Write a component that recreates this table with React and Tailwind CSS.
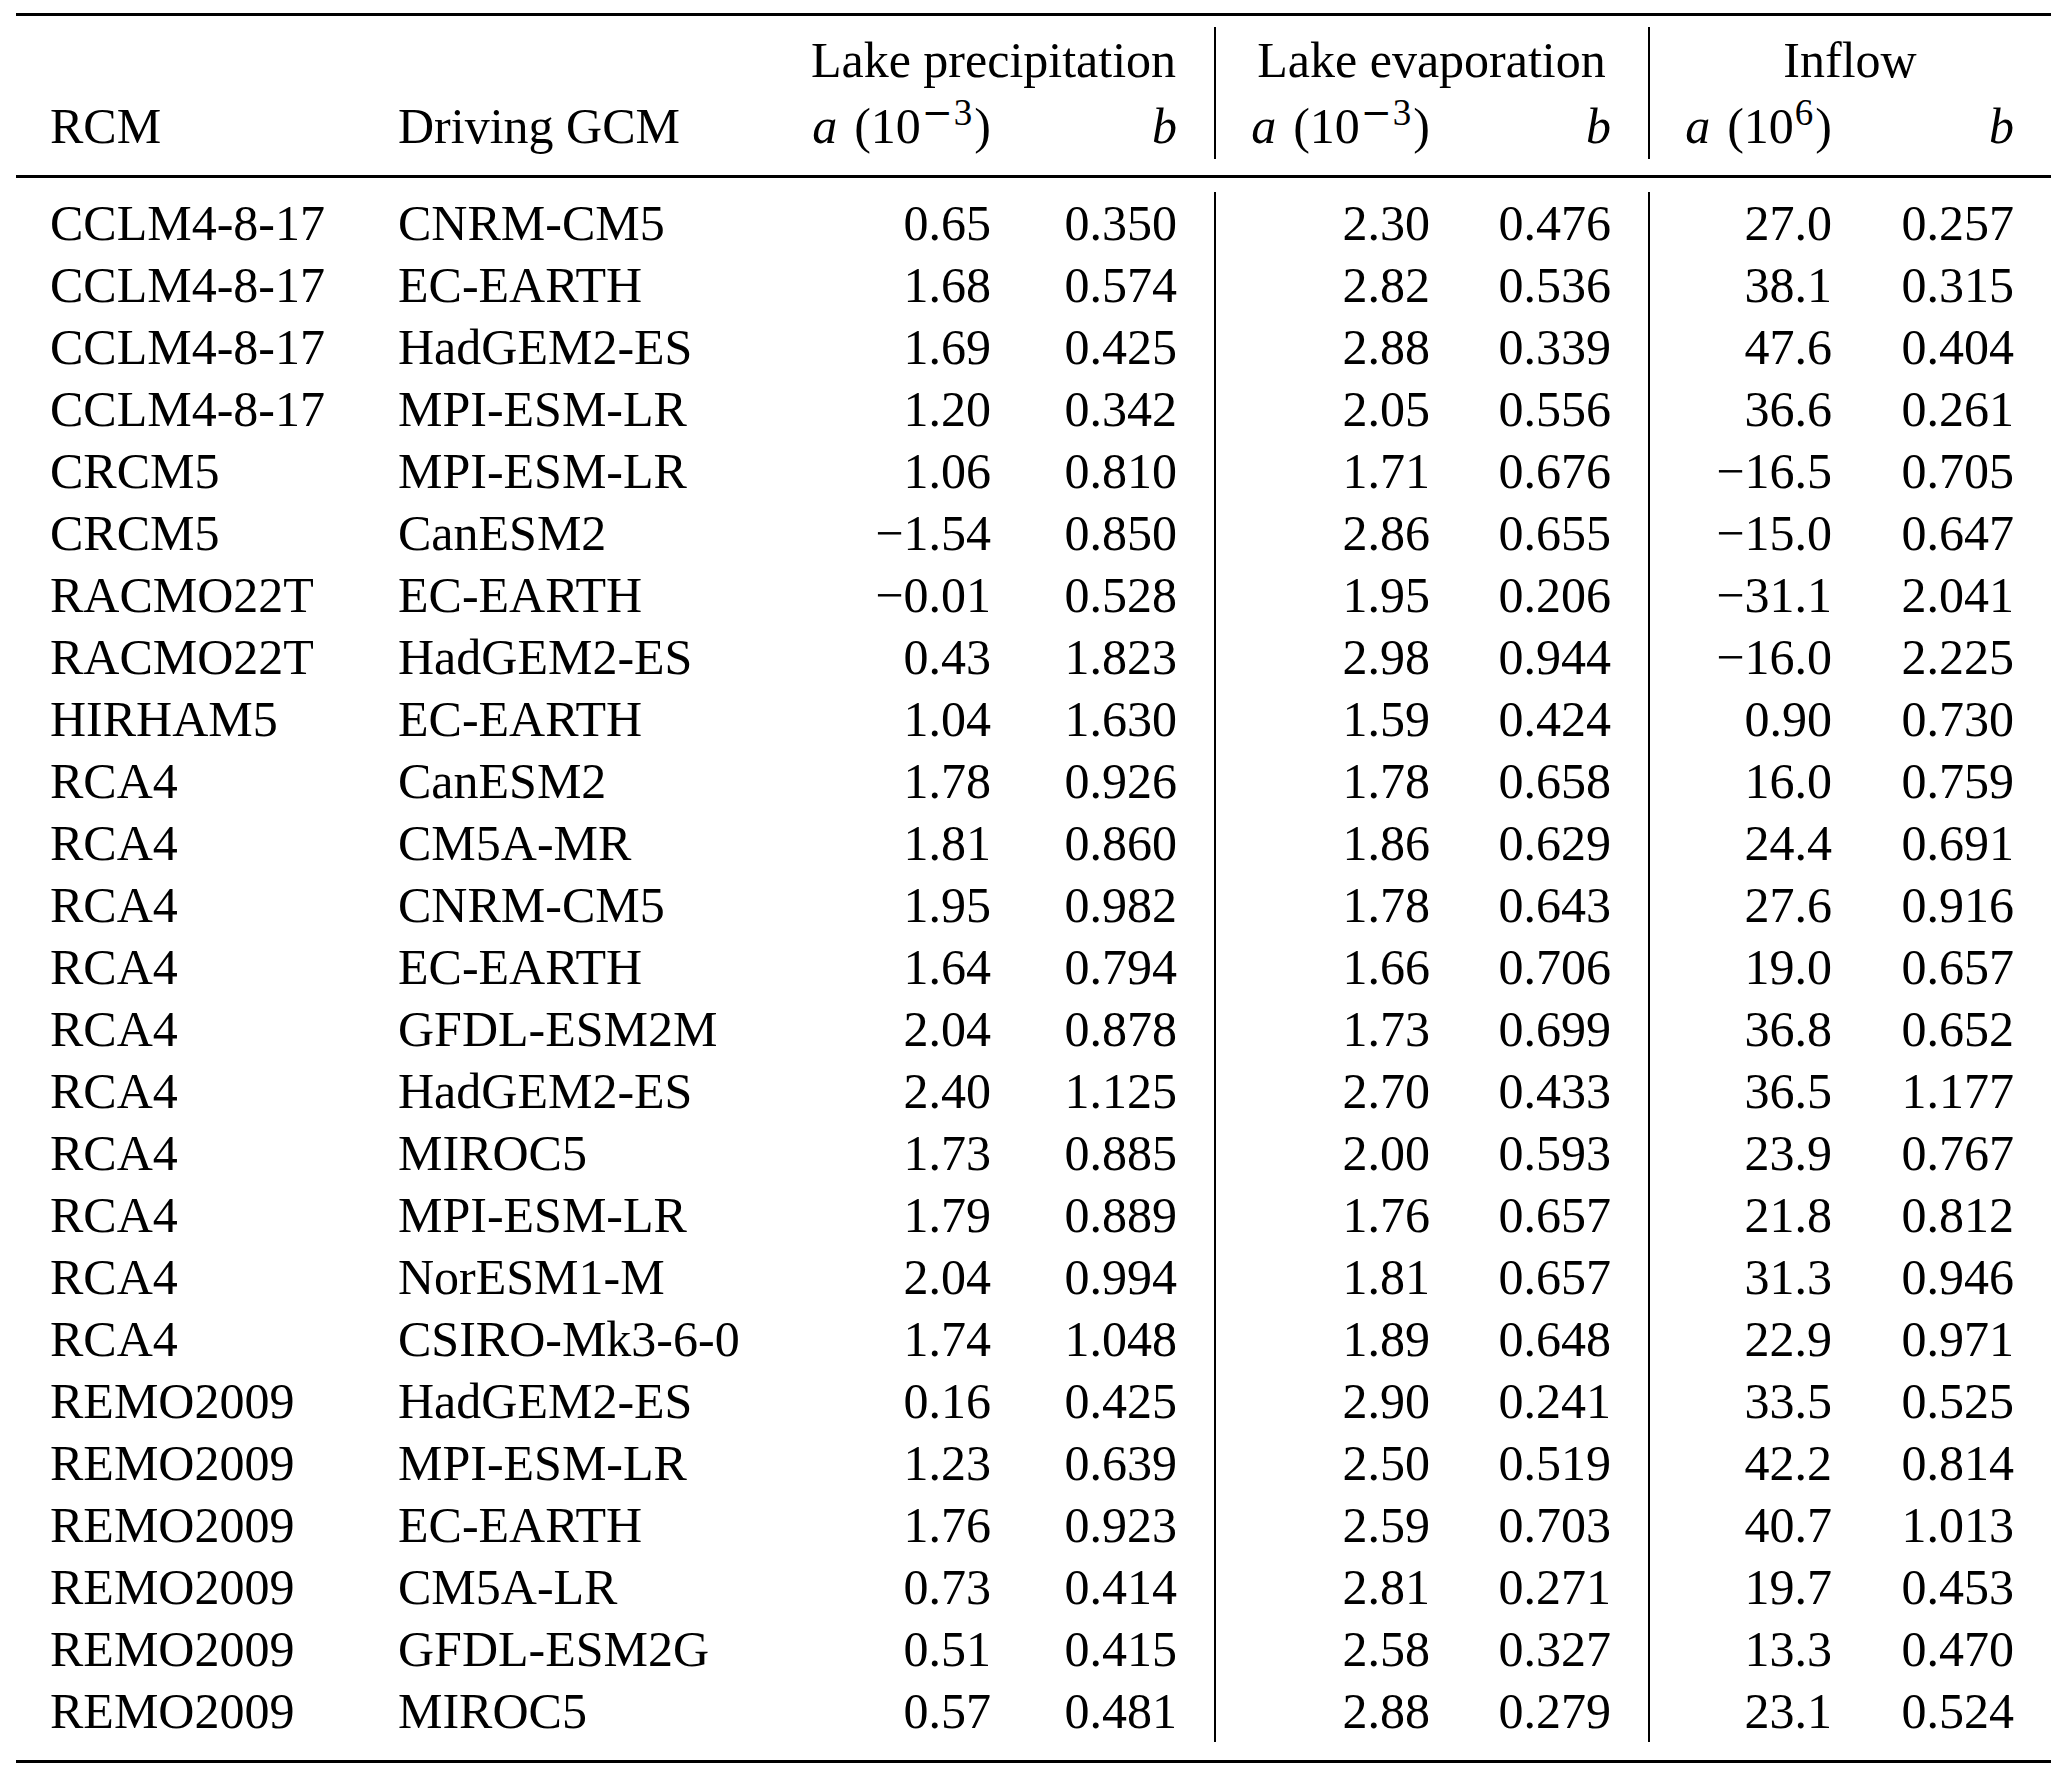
const ROWS = [
  ['CCLM4-8-17', 'CNRM-CM5', '0.65', '0.350', '2.30', '0.476', '27.0', '0.257'],
  ['CCLM4-8-17', 'EC-EARTH', '1.68', '0.574', '2.82', '0.536', '38.1', '0.315'],
  ['CCLM4-8-17', 'HadGEM2-ES', '1.69', '0.425', '2.88', '0.339', '47.6', '0.404'],
  ['CCLM4-8-17', 'MPI-ESM-LR', '1.20', '0.342', '2.05', '0.556', '36.6', '0.261'],
  ['CRCM5', 'MPI-ESM-LR', '1.06', '0.810', '1.71', '0.676', '\u221216.5', '0.705'],
  ['CRCM5', 'CanESM2', '\u22121.54', '0.850', '2.86', '0.655', '\u221215.0', '0.647'],
  ['RACMO22T', 'EC-EARTH', '\u22120.01', '0.528', '1.95', '0.206', '\u221231.1', '2.041'],
  ['RACMO22T', 'HadGEM2-ES', '0.43', '1.823', '2.98', '0.944', '\u221216.0', '2.225'],
  ['HIRHAM5', 'EC-EARTH', '1.04', '1.630', '1.59', '0.424', '0.90', '0.730'],
  ['RCA4', 'CanESM2', '1.78', '0.926', '1.78', '0.658', '16.0', '0.759'],
  ['RCA4', 'CM5A-MR', '1.81', '0.860', '1.86', '0.629', '24.4', '0.691'],
  ['RCA4', 'CNRM-CM5', '1.95', '0.982', '1.78', '0.643', '27.6', '0.916'],
  ['RCA4', 'EC-EARTH', '1.64', '0.794', '1.66', '0.706', '19.0', '0.657'],
  ['RCA4', 'GFDL-ESM2M', '2.04', '0.878', '1.73', '0.699', '36.8', '0.652'],
  ['RCA4', 'HadGEM2-ES', '2.40', '1.125', '2.70', '0.433', '36.5', '1.177'],
  ['RCA4', 'MIROC5', '1.73', '0.885', '2.00', '0.593', '23.9', '0.767'],
  ['RCA4', 'MPI-ESM-LR', '1.79', '0.889', '1.76', '0.657', '21.8', '0.812'],
  ['RCA4', 'NorESM1-M', '2.04', '0.994', '1.81', '0.657', '31.3', '0.946'],
  ['RCA4', 'CSIRO-Mk3-6-0', '1.74', '1.048', '1.89', '0.648', '22.9', '0.971'],
  ['REMO2009', 'HadGEM2-ES', '0.16', '0.425', '2.90', '0.241', '33.5', '0.525'],
  ['REMO2009', 'MPI-ESM-LR', '1.23', '0.639', '2.50', '0.519', '42.2', '0.814'],
  ['REMO2009', 'EC-EARTH', '1.76', '0.923', '2.59', '0.703', '40.7', '1.013'],
  ['REMO2009', 'CM5A-LR', '0.73', '0.414', '2.81', '0.271', '19.7', '0.453'],
  ['REMO2009', 'GFDL-ESM2G', '0.51', '0.415', '2.58', '0.327', '13.3', '0.470'],
  ['REMO2009', 'MIROC5', '0.57', '0.481', '2.88', '0.279', '23.1', '0.524'],
];

// one class per column: alignment, padding and the two vertical rules
const COLS = [
  'pl-[34px]',
  '',
  'text-right',
  'text-right pr-[37px]',
  'text-right border-l-2 border-black',
  'text-right pr-[37px]',
  'text-right border-l-2 border-black',
  'text-right pr-[35px]',
];

const GRID = 'grid grid-cols-[382px_412px_181px_223px_216px_218px_184px_217px]';

// "a (10^x)" header, math style: italic a, wide minus in the exponent
function Coef({ neg, exp }) {
  return (
    <>
      <i>a</i>
      <span className="ml-[17px]">(10</span>
      <sup className="text-[37px] ml-[1px] mr-[2px]">
        {neg && <span className="font-['DejaVu_Serif',serif] mr-[1px]">{'\u2212'}</span>}
        {exp}
      </sup>
      )
    </>
  );
}

export default function App() {
  return (
    <div className="w-[2067px] h-[1778px] bg-white text-black font-['Liberation_Serif',serif] text-[50px] px-[16px] pt-[13px]">
      {/* top rule */}
      <div className="h-[3px] bg-black" />

      {/* header */}
      <div className="mt-[11px] leading-[66px]">
        <div className={GRID}>
          <div className="col-span-2" />
          <div className="col-span-2 text-center pr-[37px]">Lake precipitation</div>
          <div className="col-span-2 text-center border-l-2 border-black pl-[36px] pr-[37px]">Lake evaporation</div>
          <div className="col-span-2 text-center border-l-2 border-black pl-[36px] pr-[35px]">Inflow</div>
        </div>
        <div className={GRID}>
          <div className={COLS[0]}>RCM</div>
          <div className={COLS[1]}>Driving GCM</div>
          <div className={COLS[2]}><Coef neg exp="3" /></div>
          <div className={COLS[3]}><i>b</i></div>
          <div className={COLS[4]}><Coef neg exp="3" /></div>
          <div className={COLS[5]}><i>b</i></div>
          <div className={COLS[6]}><Coef exp="6" /></div>
          <div className={COLS[7]}><i>b</i></div>
        </div>
      </div>

      {/* mid rule */}
      <div className="mt-[16px] h-[3px] bg-black" />

      {/* body */}
      <div className={`${GRID} mt-[14px] leading-[62px]`}>
        {ROWS.map((row, r) =>
          row.map((cell, c) => (
            <div key={`${r}-${c}`} className={COLS[c]}>{cell}</div>
          ))
        )}
      </div>

      {/* bottom rule */}
      <div className="mt-[18px] h-[3px] bg-black" />
    </div>
  );
}
